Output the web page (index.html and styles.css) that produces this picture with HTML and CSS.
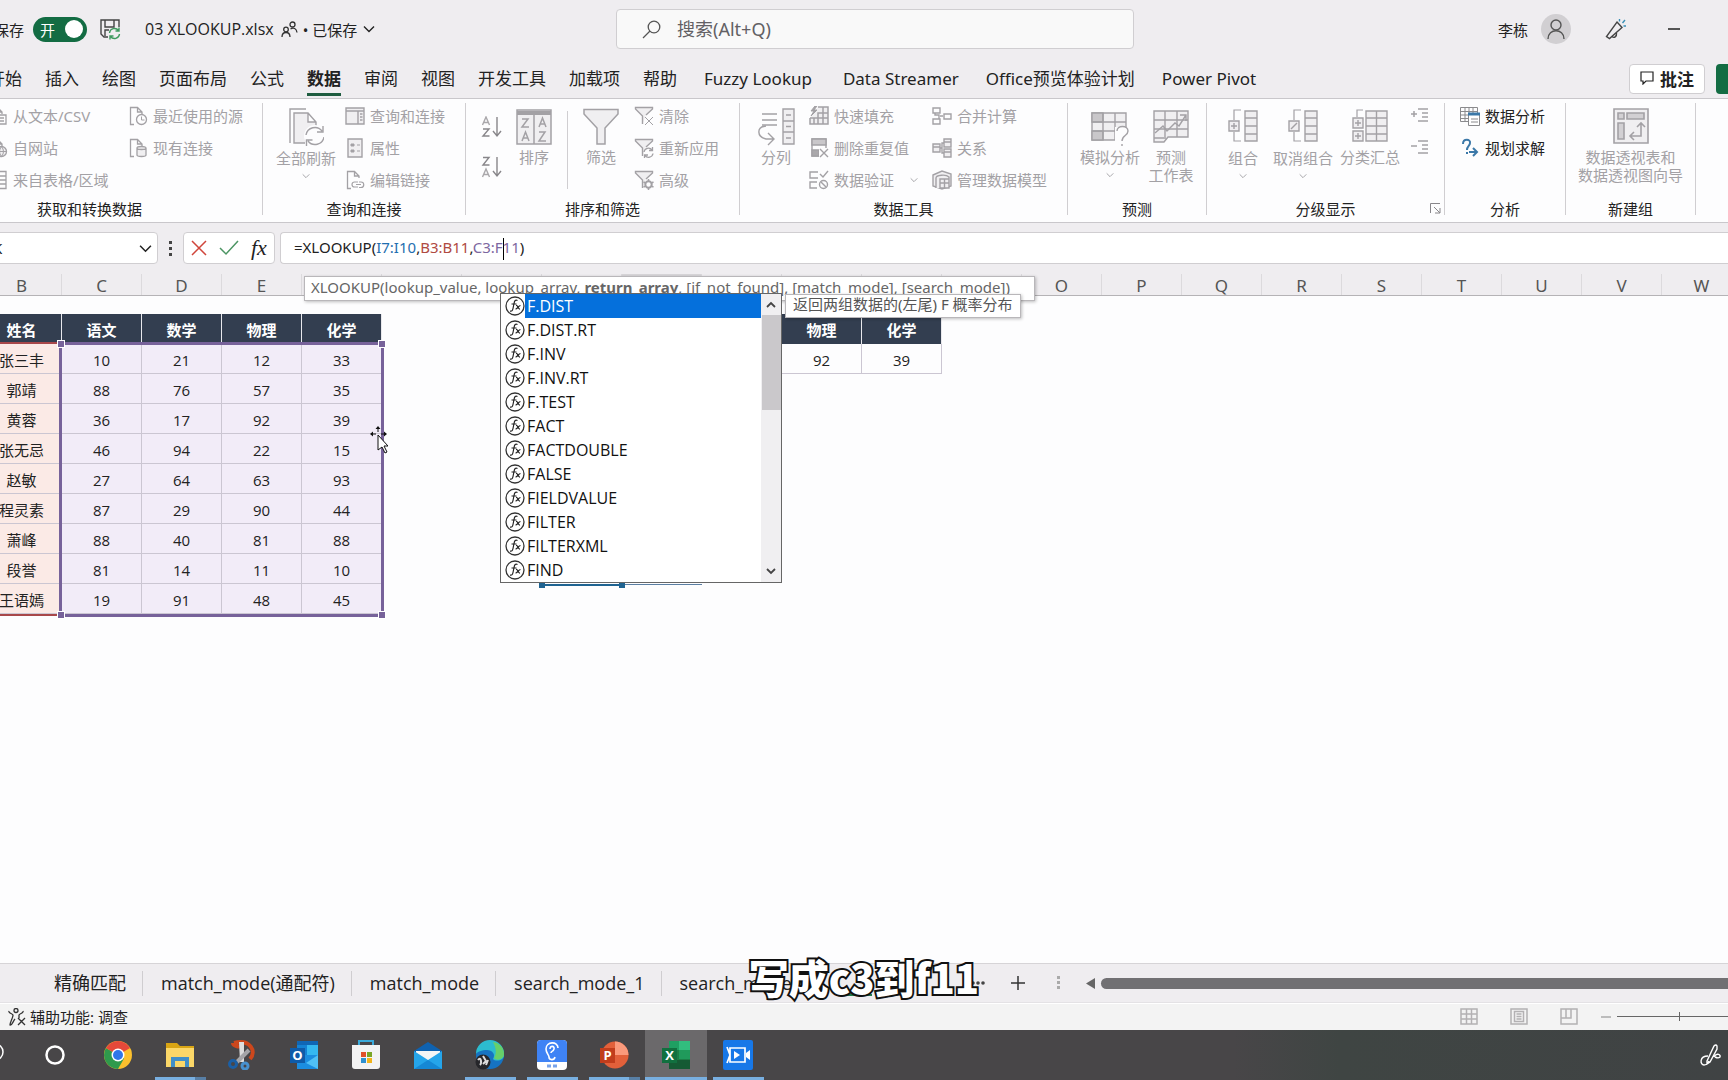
FILE: index.html
```html
<!DOCTYPE html>
<html lang="zh-CN">
<head>
    <meta charset="UTF-8">
    <meta name="viewport" content="width=device-width, initial-scale=1.0">
    <title>03 XLOOKUP.xlsx</title>
    <link rel="stylesheet" href="styles.css">
</head>
<body>
    <!-- shared icons -->
    <svg class="defs" aria-hidden="true">
        <symbol id="chevron" viewBox="0 0 12 8"><path d="M1 1.5l5 5 5-5" fill="none" stroke="currentColor" stroke-width="1.4"/></symbol>
        <symbol id="fx" viewBox="0 0 20 20"><circle cx="10" cy="10" r="9" fill="#fff" stroke="#333" stroke-width="1.3"/><path d="M12.500 4.500c-2-1-3 0-3.500 3l-1 5c-.5 2.500-1.500 3-3 2.500M6.500 8h5M11 9.500c2-.5 2 4 4 3.500M15.500 9.500c-2 0-3 3.500-5 3.500" fill="none" stroke="#222" stroke-width="1.200"/></symbol>
        <symbol id="page" viewBox="0 0 20 20"><path d="M6 18.5H2.500V1.500h7l4.500 4.500v2M9.500 1.500V6H14" fill="none" stroke="currentColor" stroke-width="1.3"/></symbol>
        <symbol id="funnel" viewBox="0 0 20 20"><path d="M8.500 18v-8L1.500 3V1.500h17V3L12 9" fill="#f0eff1" stroke="currentColor" stroke-width="1.4"/></symbol>
    </svg>

    <header class="titlebar">
        <div class="title-left">
            <label class="autosave">保存<input type="checkbox" checked><span class="switch">开</span></label>
            <button class="plain save" aria-label="保存">
                <svg width="21" height="21" viewBox="0 0 21 21" fill="none" stroke="#444" stroke-width="1.400"><path d="M8 18H4l-3-3V1h18v7M5 1v7h9V1M5 17v-6h4"/><path d="M9.500 14a5 5 0 0 1 9-2.500M19 8.500v3.500h-3.500M19.500 15a5 5 0 0 1-9 2.500M10 20.500V17h3.500" stroke="#3f9a5f"/></svg>
            </button>
            <span class="filename">03 XLOOKUP.xlsx</span>
            <svg width="17" height="17" viewBox="0 0 17 17" fill="none" stroke="#333" stroke-width="1.300"><circle cx="5" cy="8.500" r="2.300"/><path d="M1 16c0-6 8-6 8 0"/><circle cx="11.500" cy="3.500" r="2.500"/><path d="M9.500 8c3-2 6-.5 6.500 3.500"/></svg>
            <button class="plain saved">• 已保存 <svg width="12" height="8"><use href="#chevron"/></svg></button>
        </div>
        <label class="search">
            <svg width="19" height="19" viewBox="0 0 19 19" fill="none" stroke="#555" stroke-width="1.300"><circle cx="12" cy="7" r="5.800"/><path d="M8 11l-7 7"/></svg>
            <input type="text" placeholder="搜索(Alt+Q)" aria-label="搜索">
        </label>
        <div class="title-right">
            <span>李栋</span>
            <span class="avatar"><svg width="20" height="20" viewBox="0 0 20 20" fill="none" stroke="#555" stroke-width="1.400"><circle cx="10" cy="6" r="5"/><path d="M2 20c0-11 16-11 16 0"/></svg></span>
            <button class="plain horn" aria-label="新增功能"><svg width="22" height="22" viewBox="0 0 22 22" fill="none" stroke="#444" stroke-width="1.400"><path d="M12 4l5 5.500L4.500 20.500 1.500 18.500zM7 18.500c2 2 5 0 4.500-3.500"/><path d="M14.500 3.500V1M17.500 5L20 2M18.500 8H21" stroke="#3a8fb5"/></svg></button>
            <button class="plain minimize" aria-label="最小化"><svg width="12" height="4" viewBox="0 0 12 4"><path d="M0 2h12" stroke="#222" stroke-width="1.500"/></svg></button>
        </div>
    </header>

    <nav class="tabs">
        <a href="#">开始</a>
        <a href="#">插入</a>
        <a href="#">绘图</a>
        <a href="#">页面布局</a>
        <a href="#">公式</a>
        <a href="#" class="active">数据</a>
        <a href="#">审阅</a>
        <a href="#">视图</a>
        <a href="#">开发工具</a>
        <a href="#">加载项</a>
        <a href="#">帮助</a>
        <a href="#" class="latin">Fuzzy Lookup</a>
        <a href="#" class="latin">Data Streamer</a>
        <a href="#">Office预览体验计划</a>
        <a href="#" class="latin">Power Pivot</a>
        <div class="tab-actions">
            <button class="comments"><svg width="14" height="14" viewBox="0 0 14 14" fill="none" stroke="#222" stroke-width="1.200"><path d="M1 1h12v9H6l-3 3v-3H1z"/></svg>批注</button>
            <button class="share" aria-label="共享"></button>
        </div>
    </nav>

    <section class="ribbon">
        <div class="group g-get">
            <div class="group-body">
                <div class="col wide">
                    <button class="small"><svg width="20" height="20"><use href="#page"/><path d="M8 9h10v9H8zM10 12h6M10 15h6" fill="none" stroke="currentColor" stroke-width="1.300"/></svg>从文本/CSV</button>
                    <button class="small"><svg width="20" height="20"><use href="#page"/><circle cx="13.500" cy="13.500" r="5" fill="#f0eff1" stroke="currentColor" stroke-width="1.300"/><path d="M8.500 13.500h10M13.500 8.500q-4 5 0 10q4-5 0-10" fill="none" stroke="currentColor"/></svg>自网站</button>
                    <button class="small"><svg width="20" height="20" fill="none" stroke="currentColor" stroke-width="1.300"><path d="M2 1.500h16v17H2zM2 6h16M2 10h16M2 14h16M10 6v12"/></svg>来自表格/区域</button>
                </div>
                <div class="col">
                    <button class="small"><svg width="20" height="20"><use href="#page"/><circle cx="13.500" cy="13.500" r="5" fill="#fdfdfe" stroke="currentColor" stroke-width="1.300"/><path d="M13.500 10.500v3.500h3" fill="none" stroke="currentColor"/></svg>最近使用的源</button>
                    <button class="small"><svg width="20" height="20"><use href="#page"/><path d="M9 10v7c0 2 9 2 9 0v-7c0-2-9-2-9 0c0 2 9 2 9 0" fill="#f0eff1" stroke="currentColor" stroke-width="1.300"/></svg>现有连接</button>
                </div>
            </div>
            <div class="group-name">获取和转换数据</div>
        </div>

        <div class="group g-query">
            <div class="group-body">
                <button class="big">
                    <svg width="36" height="38" viewBox="0 0 36 38" fill="none" stroke="currentColor" stroke-width="1.400"><path d="M2 35V1h16"/><path d="M17 35H6V5h14l8 9v6M20 5v9h8" fill="#f0eff1"/><circle cx="27" cy="28" r="11" fill="#fdfdfe" stroke="none"/><path d="M18 27a9 9 0 0 1 16-4M35 18v6h-6M36 29a9 9 0 0 1-16 4M18.500 38v-6h6"/></svg>
                    <span class="low">全部刷新</span>
                    <svg width="8" height="6"><use href="#chevron"/></svg>
                </button>
                <div class="col">
                    <button class="small"><svg width="20" height="20" fill="#f0eff1" stroke="currentColor" stroke-width="1.400"><path d="M1 2h18v16H1z"/><path d="M1 5h18M13 5v13M15 8h2.500M15 11h2.500M15 14h2.500"/></svg>查询和连接</button>
                    <button class="small"><svg width="20" height="20" fill="#f0eff1" stroke="currentColor" stroke-width="1.400"><path d="M3 1h14v18H3z"/><path d="M6 6h3v2H6zM6 12h3v2H6zM12 7h3M12 13h3" fill="currentColor" stroke-width="1"/></svg>属性</button>
                    <button class="small"><svg width="20" height="20"><use href="#page"/><path d="M13 12H9.500a2.500 2.500 0 0 0 0 5H13M11 14.500h5M14 12h2a2.500 2.500 0 0 1 0 5.500h-2" fill="none" stroke="currentColor" stroke-width="1.200"/></svg>编辑链接</button>
                </div>
            </div>
            <div class="group-name">查询和连接</div>
        </div>

        <div class="group g-sort">
            <div class="group-body">
                <div class="az">
                    <button class="plain" aria-label="升序"><svg width="22" height="22" fill="none" stroke="#88868a" stroke-width="1.400"><path d="M1.500 9L5 1l3.500 8M2.500 6.500h5" stroke="#aaa8ab"/><path d="M2 13h6l-6 7h6.500M16 1v19M12 15l4 5 4-5"/></svg></button>
                    <button class="plain" aria-label="降序"><svg width="22" height="22" fill="none" stroke="#88868a" stroke-width="1.400"><path d="M2 1.500h6L2 9h6.500M16 1v19M12 15l4 5 4-5"/><path d="M1.500 21L5 13l3.500 8M2.500 18.500h5" stroke="#aaa8ab"/></svg></button>
                </div>
                <button class="big narrow">
                    <svg width="36" height="38" fill="none" stroke="currentColor" stroke-width="1.500"><path d="M1 2h34v34H1z" fill="#f0eff1"/><path d="M1 5h34" stroke-width="4"/><path d="M18 7v29"/><path d="M6 11h6l-6 8h7M6 33l3.500-9 3.500 9M7 30h5M23 19l3.500-9 3.500 9M24 16h5M23 24h6l-6 9h7"/></svg>
                    <span>排序</span>
                </button>
                <div class="rule"></div>
                <button class="big narrow">
                    <svg width="36" height="38" viewBox="0 0 36 38"><path d="M1 1.500h34V6L22 20v16h-8V20L1 6z" fill="#f0eff1" stroke="currentColor" stroke-width="1.500"/></svg>
                    <span>筛选</span>
                </button>
                <div class="col">
                    <button class="small"><svg width="20" height="20"><use href="#funnel"/><path d="M11 11l8 8M19 11l-8 8" stroke="currentColor"/></svg>清除</button>
                    <button class="small"><svg width="20" height="20"><use href="#funnel"/><path d="M10 14a4.500 4.500 0 0 1 8-2M18.500 9v3.500H15M19 15.500a4.500 4.500 0 0 1-8 2M10.500 20v-3H14" fill="none" stroke="currentColor" stroke-width="1.300"/></svg>重新应用</button>
                    <button class="small"><svg width="20" height="20"><use href="#funnel"/><circle cx="14.500" cy="14.500" r="3.200" fill="none" stroke="currentColor" stroke-width="2"/><path d="M14.500 9v3M14.500 17v3M9.500 12l2 1M17 16l2.500 1M19.500 12l-2 1M12 16l-2.500 1" stroke="currentColor" stroke-width="1.500"/></svg>高级</button>
                </div>
            </div>
            <div class="group-name">排序和筛选</div>
        </div>

        <div class="group g-tools">
            <div class="group-body">
                <button class="big split">
                    <svg width="38" height="38" viewBox="0 0 38 38" fill="none" stroke="currentColor" stroke-width="1.400"><path d="M5 6h15M5 12h15M5 17h15"/><path d="M9 18C-1 19 0 29 9 31h7M11 25l6 6-6 6"/><path d="M26 1h11v35H26zM26 13h11M26 24h11" fill="#f0eff1"/><path d="M29 7h5M29 18.500h5M29 30h5"/></svg>
                    <span>分列</span>
                </button>
                <div class="col tools">
                    <button class="small"><svg width="20" height="20" fill="none" stroke="currentColor" stroke-width="1.500"><path d="M9 1h10v17H1v-6M1 12h18M9 18V7h10M14 1v17M5 12v6" fill="#f0eff1"/><path d="M6 0L2 5h3l-3 5 6-6H5l3-4" fill="currentColor" stroke-width="1"/></svg>快速填充</button>
                    <button class="small"><svg width="20" height="20" fill="#f0eff1" stroke="currentColor" stroke-width="1.400"><path d="M3 1h14v17H3z" fill="none"/><path d="M3 1h14v6H3z" fill="#c9c7ca"/><path d="M3 12h7v6H3z" fill="#aaa8ab"/><path d="M10 10h10v10H10z" fill="#fdfdfe" stroke="none"/><path d="M11 11l8 8M19 11l-8 8"/></svg>删除重复值</button>
                    <button class="small"><svg width="20" height="20" fill="none" stroke="currentColor" stroke-width="1.400"><path d="M9 2H1v6h8M8 12H1v6h7M11 4l3 3 5-6"/><circle cx="14.500" cy="14.500" r="4"/><path d="M12 12l5 5"/></svg>数据验证<svg class="drop" width="8" height="6"><use href="#chevron"/></svg></button>
                </div>
                <div class="col">
                    <button class="small"><svg width="20" height="20" fill="none" stroke="currentColor" stroke-width="1.400"><path d="M1 2h7v5H1zM1 13h7v5H1zM12 8h7v5h-7zM3 7v2h4v4M8 10h3"/></svg>合并计算</button>
                    <button class="small"><svg width="20" height="20" fill="#f0eff1" stroke="currentColor" stroke-width="1.400"><path d="M7 10h3V5h3M10 10v5h3" fill="none"/><path d="M1 6h7v8H1zM12 1h7v8h-7zM12 11h7v8h-7zM1 9h7M12 4h7M12 14h7"/></svg>关系</button>
                    <button class="small"><svg width="20" height="20" fill="#f0eff1" stroke="currentColor" stroke-width="1.400"><path d="M1 5l9-4 9 3v12l-9 3-9-3z"/><path d="M4 18V8c0-3 10-4 13-1v11M8 9h9v9H8zM8 13h9M12.500 9v9"/></svg>管理数据模型</button>
                </div>
            </div>
            <div class="group-name">数据工具</div>
        </div>

        <div class="group g-forecast">
            <div class="group-body">
                <button class="big">
                    <svg width="38" height="38" viewBox="0 0 38 38" fill="none" stroke="currentColor" stroke-width="1.400"><path d="M1 5h34v27H1z" fill="#f0eff1"/><path d="M1 5h11v9H1zM1 23h11v9H1z" fill="#c9c7ca"/><path d="M1 14h34M1 23h34M12 5v27M24 5v27"/><path d="M24 19h14v19H24z" fill="#fdfdfe" stroke="none"/><path d="M26 23c0-6 11-6 11 0c0 5-6 4-6 10M31 36v2"/></svg>
                    <span>模拟分析</span>
                    <svg width="8" height="6"><use href="#chevron"/></svg>
                </button>
                <button class="big mid">
                    <svg width="36" height="38" viewBox="0 0 36 38" fill="none" stroke="currentColor" stroke-width="1.400"><path d="M1 3h34v26H15l-4 5H1zM1 12h34M1 21h34M12 3v26M24 3v26" fill="#f0eff1"/><path d="M1 30h12M2 25l8-7 4 5 8-8 4 3L33 7M27 7h6v6"/></svg>
                    <span>预测<br>工作表</span>
                </button>
            </div>
            <div class="group-name">预测</div>
        </div>

        <div class="group g-outline">
            <div class="group-body">
                <button class="big mid">
                    <svg width="30" height="38" viewBox="0 0 30 38" fill="none" stroke="currentColor" stroke-width="1.400"><path d="M13 2H6v10M6 24v9h7" stroke-width="1.200"/><path d="M1 13h10v10H1zM17 3h12v30H17zM17 10h12M17 18h12M17 26h12" fill="#f0eff1"/><path d="M3 18h6M6 15v6"/></svg>
                    <span class="low">组合</span>
                    <svg width="8" height="6"><use href="#chevron"/></svg>
                </button>
                <button class="big">
                    <svg width="30" height="38" viewBox="0 0 30 38" fill="none" stroke="currentColor" stroke-width="1.400"><path d="M13 2H6v10M6 24v9h7" stroke-width="1.200"/><path d="M1 13h10v10H1zM17 3h12v30H17zM17 10h12M17 18h12M17 26h12" fill="#f0eff1"/><path d="M3 21l6-6"/></svg>
                    <span class="low">取消组合</span>
                    <svg width="8" height="6"><use href="#chevron"/></svg>
                </button>
                <button class="big">
                    <svg width="36" height="38" viewBox="0 0 36 38" fill="none" stroke="currentColor" stroke-width="1.400"><path d="M11 2H5v7" stroke-width="1.200"/><path d="M1 10h10v10H1zM1 23h10v10H1zM14 3h21v30H14zM14 10h21M14 18h21M14 26h21M24.500 3v30" fill="#f0eff1"/><path d="M3 15h6M6 12v6M3 28h6M6 25v6"/></svg>
                    <span>分类汇总</span>
                </button>
                <div class="col outline-side">
                    <button class="small" aria-label="显示明细数据"><svg width="26" height="20" fill="none" stroke="currentColor" stroke-width="1.500"><path d="M4 8h6M7 5v6M11 3h10M15 7h6M15 11h6M11 15h10"/></svg></button>
                    <button class="small" aria-label="隐藏明细数据"><svg width="26" height="20" fill="none" stroke="currentColor" stroke-width="1.500"><path d="M4 8h6M11 3h10M15 7h6M15 11h6M11 15h10"/></svg></button>
                </div>
            </div>
            <div class="group-name">分级显示
                <button class="plain launcher" aria-label="分级显示设置"><svg width="11" height="11" viewBox="0 0 11 11" fill="none" stroke="#88868a"><path d="M.5 10V.5H10M4 4l6 6M10 5v5H5"/></svg></button>
            </div>
        </div>

        <div class="group g-analysis">
            <div class="group-body">
                <div class="col">
                    <button class="small enabled"><svg width="20" height="20" fill="none" stroke="#8a8a8d"><path d="M.5 1.500h17v14H.5zM.5 5.500h17M.5 9h17M.5 12.500h17M5 1.500v14M9 1.500v14M13 1.500v14"/><path d="M8.500 8.500h11v11h-11z" fill="#fff"/><path d="M8 8h12" stroke="#3b78a8" stroke-width="3"/><path d="M11 13h7M11 16h7"/></svg>数据分析</button>
                    <button class="small enabled"><svg width="20" height="20" fill="none" stroke="#3b78a8" stroke-width="2"><path d="M3 6c0-6 8-5 7-1c0 3-3 3-3 7M7 14v2M9 14h8M13 10l4 4-4 4"/></svg>规划求解</button>
                </div>
            </div>
            <div class="group-name">分析</div>
        </div>

        <div class="group g-new">
            <div class="group-body">
                <button class="big pivot">
                    <svg width="36" height="38" viewBox="0 0 36 38" fill="none" stroke="currentColor" stroke-width="1.600"><path d="M1 1h34v34H1z" fill="#f0eff1"/><path d="M5 5h6v6H5zM14 5h17v6H14zM5 15h6v16H5z" fill="#d2d0d3"/><path d="M17 28h11V15M24 19l4-4 4 4M21 24l-4 4 4 4"/></svg>
                    <span>数据透视表和<br>数据透视图向导</span>
                </button>
            </div>
            <div class="group-name">新建组</div>
        </div>
    </section>

    <section class="formula-bar">
        <label class="name-box"><input type="text" value="K" aria-label="名称框"><svg width="13" height="9"><use href="#chevron"/></svg></label>
        <svg class="grip" width="4" height="15" viewBox="0 0 4 15"><path d="M0 0h3v3H0zM0 6h3v3H0zM0 12h3v3H0z" fill="#444"/></svg>
        <div class="fx-buttons">
            <button class="plain" aria-label="取消"><svg width="16" height="16" viewBox="0 0 16 16"><path d="M1 1l14 14M15 1L1 15" stroke="#d0453b" stroke-width="1.500"/></svg></button>
            <button class="plain" aria-label="输入"><svg width="20" height="16" viewBox="0 0 20 16"><path d="M1 8l6 6L19 1" fill="none" stroke="#4c9563" stroke-width="1.500"/></svg></button>
            <button class="plain insert-fx">fx</button>
        </div>
        <div class="formula" role="textbox" aria-label="编辑栏">=XLOOKUP(<span class="ref-blue">I7:I10</span>,<span class="ref-red">B3:B11</span>,<span class="ref-purple">C3:F<i class="caret"></i>11</span>)</div>
    </section>

    <main class="sheet">
        <div class="col-heads">
            <span>B</span><span>C</span><span>D</span><span>E</span><span></span><span></span><span></span><span></span><span class="current"></span><span></span><span></span><span></span><span></span><span>O</span><span>P</span><span>Q</span><span>R</span><span>S</span><span>T</span><span>U</span><span>V</span><span>W</span>
        </div>
        <div class="cells">
            <div class="source">
                <table>
                    <thead><tr><th>姓名</th><th>语文</th><th>数学</th><th>物理</th><th>化学</th></tr></thead>
                    <tbody>
                        <tr><td>张三丰</td><td>10</td><td>21</td><td>12</td><td>33</td></tr>
                        <tr><td>郭靖</td><td>88</td><td>76</td><td>57</td><td>35</td></tr>
                        <tr><td>黄蓉</td><td>36</td><td>17</td><td>92</td><td>39</td></tr>
                        <tr><td>张无忌</td><td>46</td><td>94</td><td>22</td><td>15</td></tr>
                        <tr><td>赵敏</td><td>27</td><td>64</td><td>63</td><td>93</td></tr>
                        <tr><td>程灵素</td><td>87</td><td>29</td><td>90</td><td>44</td></tr>
                        <tr><td>萧峰</td><td>88</td><td>40</td><td>81</td><td>88</td></tr>
                        <tr><td>段誉</td><td>81</td><td>14</td><td>11</td><td>10</td></tr>
                        <tr><td>王语嫣</td><td>19</td><td>91</td><td>48</td><td>45</td></tr>
                    </tbody>
                </table>
                <div class="range red"></div>
                <div class="range purple"><i></i><i></i><i></i><i></i></div>
                <svg class="cursor" width="18" height="28" viewBox="0 0 18 28"><path d="M8 0L5.500 3h2v3h1V3h2zM0 8l3-2.500v2h3v1H3v2zM17 8l-3-2.500v2h-3v1h3v2z" fill="#111"/><path d="M8 9v15l4-3 3 6 2-1-3-6h4z" fill="#fff" stroke="#111"/></svg>
            </div>
            <table class="lookup">
                <thead><tr><th>物理</th><th>化学</th></tr></thead>
                <tbody><tr><td>92</td><td>39</td></tr></tbody>
            </table>
            <div class="range blue"><i></i><i></i></div>
        </div>

        <div class="signature">XLOOKUP(lookup_value, lookup_array, <b>return_array</b>, [if_not_found], [match_mode], [search_mode])</div>
        <div class="description">返回两组数据的(左尾) F 概率分布</div>
        <div class="suggest">
            <ul>
                <li class="selected"><svg width="20" height="20"><use href="#fx"/></svg><span>F.DIST</span></li>
                <li><svg width="20" height="20"><use href="#fx"/></svg><span>F.DIST.RT</span></li>
                <li><svg width="20" height="20"><use href="#fx"/></svg><span>F.INV</span></li>
                <li><svg width="20" height="20"><use href="#fx"/></svg><span>F.INV.RT</span></li>
                <li><svg width="20" height="20"><use href="#fx"/></svg><span>F.TEST</span></li>
                <li><svg width="20" height="20"><use href="#fx"/></svg><span>FACT</span></li>
                <li><svg width="20" height="20"><use href="#fx"/></svg><span>FACTDOUBLE</span></li>
                <li><svg width="20" height="20"><use href="#fx"/></svg><span>FALSE</span></li>
                <li><svg width="20" height="20"><use href="#fx"/></svg><span>FIELDVALUE</span></li>
                <li><svg width="20" height="20"><use href="#fx"/></svg><span>FILTER</span></li>
                <li><svg width="20" height="20"><use href="#fx"/></svg><span>FILTERXML</span></li>
                <li><svg width="20" height="20"><use href="#fx"/></svg><span>FIND</span></li>
            </ul>
            <div class="scroll">
                <svg width="10" height="21" viewBox="0 0 10 21"><path d="M1 13l4-4 4 4" fill="none" stroke="#444" stroke-width="1.800"/></svg>
                <div class="thumb"></div>
                <svg width="10" height="21" viewBox="0 0 10 21"><path d="M1 8l4 4 4-4" fill="none" stroke="#444" stroke-width="1.800"/></svg>
            </div>
        </div>
    </main>

    <nav class="sheet-tabs">
        <a href="#">精确匹配</a>
        <a href="#">match_mode(通配符)</a>
        <a href="#">match_mode</a>
        <a href="#">search_mode_1</a>
        <a href="#" class="last">search_mode</a>
        <span class="current-tab"></span>
        <button class="plain more" aria-label="更多工作表"><svg width="14" height="4" viewBox="0 0 14 4" fill="#444"><circle cx="2" cy="2" r="1.800"/><circle cx="7" cy="2" r="1.800"/><circle cx="12" cy="2" r="1.800"/></svg></button>
        <button class="plain add" aria-label="新工作表"><svg width="14" height="14" viewBox="0 0 14 14"><path d="M7 0v14M0 7h14" stroke="#333" stroke-width="1.500"/></svg></button>
        <svg class="dots" width="3" height="14" viewBox="0 0 3 14"><path d="M0 0h3v3H0zM0 5h3v3H0zM0 10h3v3H0z" fill="#aaa"/></svg>
        <svg width="9" height="11" viewBox="0 0 9 11"><path d="M9 0v11L0 5.500z" fill="#666"/></svg>
        <div class="hscroll"></div>
        <div class="subtitle">写成c3到f11</div>
    </nav>

    <footer class="status">
        <button class="plain access"><svg width="18" height="18" viewBox="0 0 18 18" fill="none" stroke="#333" stroke-width="1.300"><circle cx="8" cy="2.500" r="2"/><path d="M1 3c-1 2 4 3 4 4 0 3-3 7-3 10 2 1 3-4 5-6M15 3c1 2-4 3-4 4v3M10 10l7 7M17 10l-7 7"/></svg>辅助功能: 调查</button>
        <div class="views">
            <button class="plain" aria-label="普通"><svg width="18" height="17" fill="none" stroke="#b3b1b3" stroke-width="1.500"><path d="M1 1h16v15H1zM1 6h16M1 11h16M6.500 1v15M11.500 1v15"/></svg></button>
            <button class="plain" aria-label="页面布局"><svg width="18" height="17" fill="none" stroke="#b3b1b3" stroke-width="1.500"><path d="M1 1h16v15H1zM4.500 3.500h9v10h-9zM6.500 6h5M6.500 8.500h5M6.500 11h5"/></svg></button>
            <button class="plain" aria-label="分页预览"><svg width="18" height="17" fill="none" stroke="#b3b1b3" stroke-width="1.500"><path d="M1 1h16v15H1zM1 10h10V1M6 1v9"/></svg></button>
        </div>
        <button class="plain zoom-out" aria-label="缩小"><svg width="10" height="2"><path d="M0 1h10" stroke="#aaa" stroke-width="1.500"/></svg></button>
        <input class="zoom" type="range" min="10" max="400" value="400" aria-label="缩放">
    </footer>

    <div class="taskbar">
        <button class="app" aria-label="搜索"><svg width="24" height="30" viewBox="0 0 24 30"><circle cx="13" cy="12" r="8" fill="none" stroke="#fff" stroke-width="1.500"/></svg></button>
        <button class="app" aria-label="Cortana"><svg width="30" height="30" viewBox="0 0 30 30"><circle cx="14" cy="15" r="8.500" fill="none" stroke="#fff" stroke-width="2.500"/></svg></button>
        <button class="app" aria-label="Chrome"><svg width="30" height="30" viewBox="0 0 30 30"><circle cx="15" cy="15" r="14" fill="#fbc02d"/><path d="M15 15L2.900 8A14 14 0 0 0 15 29l6-10.500z" fill="#2f9a4c"/><path d="M15 15L2.900 8a14 14 0 0 1 24.200 0z" fill="#e5493a"/><circle cx="15" cy="15" r="6.500" fill="#fff"/><circle cx="15" cy="15" r="5" fill="#2f76e8"/></svg></button>
        <button class="app open multi" aria-label="文件资源管理器"><svg width="30" height="30" viewBox="0 0 30 30"><path d="M1 3h11l3 3h14v20H1z" fill="#d9a514"/><path d="M1 8h28v19H1z" fill="#fbd768"/><path d="M6 27V17h18v10h-4v-6H10v6z" fill="#418fc7"/></svg></button>
        <button class="app" aria-label="截图工具"><svg width="30" height="30" viewBox="0 0 30 30" fill="none"><path d="M7 3c16-4 23 8 16 16M6 3c0 3 6 4 8 3" stroke="#cc471c" stroke-width="4"/><path d="M12 2l1 20h4V2z" fill="#ddd"/><path d="M22 10L10 22" stroke="#a5a5a8" stroke-width="4"/><circle cx="6" cy="24" r="3.500" stroke="#1b5fa5" stroke-width="3"/><circle cx="18" cy="26" r="3" stroke="#4791cf" stroke-width="3"/></svg></button>
        <button class="app" aria-label="Outlook"><svg width="30" height="30" viewBox="0 0 30 30"><path d="M8 1h21v28H8z" fill="#1066b5"/><path d="M8 5h10v10H8z" fill="#1482d4"/><path d="M18 5h11v10H18z" fill="#35b8f1"/><path d="M8 15h21v14H8z" fill="#1b8de0"/><path d="M29 15L17 23l12 6z" fill="#50c0f5"/><path d="M1 8h15v15H1z" fill="#0f5ba8"/><text x="8.500" y="20" text-anchor="middle" font-family="Open Sans, sans-serif" font-weight="700" font-size="13" fill="#fff">O</text></svg></button>
        <button class="app" aria-label="Microsoft Store"><svg width="30" height="30" viewBox="0 0 30 30"><path d="M8 6V1h14v5" fill="none" stroke="#3baada" stroke-width="2"/><path d="M1 5h28v21q0 3-3 3H4q-3 0-3-3z" fill="#f3f3f3"/><path d="M10 12h5v5h-5z" fill="#e0502a"/><path d="M16 12h5v5h-5z" fill="#7aa626"/><path d="M10 18h5v5h-5z" fill="#2f90d0"/><path d="M16 18h5v5h-5z" fill="#f2b41a"/></svg></button>
        <button class="app" aria-label="邮件"><svg width="30" height="30" viewBox="0 0 30 30"><path d="M1 11L15 2l14 9v6H1z" fill="#0f62b0"/><path d="M3 11h24v10H3z" fill="#f5f5f5"/><path d="M1 11l14 9 14-9v18H1z" fill="#25a5ea"/><path d="M1 29l14-9 14 9z" fill="#1588d5"/></svg></button>
        <button class="app open" aria-label="Edge"><svg width="30" height="30" viewBox="0 0 30 30"><circle cx="15" cy="15" r="14" fill="#1673c2"/><path d="M1 14A14 14 0 0 1 29 14c1 7-9 8-11 5 3-5-1-9-6-9S2 12 1 14z" fill="#2cbccf"/><path d="M18 2c7 1 11 6 11 12 0 6-8 7-10 4 3-5 2-10-1-16z" fill="#67d069"/><circle cx="8" cy="22" r="7.500" fill="#26262a"/><path d="M3 20c3-4 4 3 2 5M8 16l3 5-3 3M11 25l2-5" stroke="#ddd" stroke-width="2" fill="none"/></svg></button>
        <button class="app open" aria-label="录音"><svg width="30" height="30" viewBox="0 0 30 30"><rect width="30" height="30" rx="4" fill="#fff"/><path d="M4 0h22q4 0 4 4v18H0V4q0-4 4-4z" fill="#3f83f5"/><path d="M18 17c-1 4-6 3-6 0 0-2-3-4-3-8 0-8 12-8 12-1M13 9c0-4 5-3 4 0s-3 2-3 4" fill="none" stroke="#fff" stroke-width="1.600"/><path d="M10 24.500h4v3h-4zM16 24.500h4v3h-4z" fill="#79a3ea"/></svg></button>
        <button class="app open multi" aria-label="PowerPoint"><svg width="30" height="30" viewBox="0 0 30 30"><circle cx="16" cy="15" r="13.500" fill="#e2603a"/><path d="M16 1.500A13.500 13.500 0 0 1 29.500 15H16z" fill="#fa9a7c"/><path d="M1 8h15v15H1z" fill="#c13d1c"/><text x="8.500" y="20" text-anchor="middle" font-family="Open Sans, sans-serif" font-weight="700" font-size="13" fill="#fff">P</text></svg></button>
        <button class="app open active" aria-label="Excel"><svg width="30" height="30" viewBox="0 0 30 30"><path d="M8 1h21v28H8z" fill="#1b7e46"/><path d="M8 1h10v9H8z" fill="#1f9f62"/><path d="M18 1h11v9H18z" fill="#32bd7e"/><path d="M18 10h11v9H18z" fill="#209a5b"/><path d="M8 20h21v9H8z" fill="#155a34"/><path d="M1 8h15v15H1z" fill="#11703f"/><text x="8.500" y="20" text-anchor="middle" font-family="Open Sans, sans-serif" font-weight="700" font-size="13" fill="#fff">X</text></svg></button>
        <button class="app open" aria-label="录屏"><svg width="30" height="30" viewBox="0 0 30 30" fill="none" stroke="#fff" stroke-width="1.700"><rect width="30" height="30" rx="2" fill="#1778e8" stroke="none"/><path d="M7 8h15v14H7zM4 7l3 8-3 8"/><path d="M11 11l6 4-6 4z" fill="#fff" stroke="none"/><path d="M27 10v10l-4-3v-4z" fill="#fff" stroke="none"/></svg></button>
        <button class="plain pen" aria-label="Windows Ink"><svg width="22" height="22" viewBox="0 0 22 22" fill="none" stroke="#fff" stroke-width="1.400"><path d="M7 17L14 2q2-2 3 0v3L10 18l-3 2zM8 12c-9 0-8 9-4 9 3 0 4-2 5-4M14 13c3-5 7-2 6 0-1 1-3 1-5 0"/></svg></button>
    </div>
</body>
</html>
```
FILE: styles.css
```css
* {
    box-sizing: border-box;
}
body {
    margin: 0;
    height: 100vh;
    display: flex;
    flex-direction: column;
    overflow: hidden;
    background: #efedf0;
    color: #222;
    font-family: "Noto Sans", "Noto Sans CJK SC", sans-serif;
    font-size: 15px;
}
button, input {
    font: inherit;
    color: inherit;
}
a {
    color: inherit;
    text-decoration: none;
}
svg {
    flex: none;
    display: block;
}
.defs {
    position: absolute;
    width: 0;
    height: 0;
}
.plain {
    display: flex;
    align-items: center;
    padding: 0;
    border: none;
    background: none;
    white-space: nowrap;
}
.filename, .suggest, .sheet-tabs, table {
    font-family: "Open Sans", "Noto Sans CJK SC", sans-serif;
}

/* title bar */
.titlebar {
    flex: none;
    display: flex;
    align-items: center;
    height: 60px;
    padding-bottom: 2px;
}
.title-left, .title-right {
    display: flex;
    align-items: center;
    white-space: nowrap;
}
.title-left {
    width: 36%;
    margin-left: -6px;
}
.autosave {
    display: flex;
    align-items: center;
    gap: 9px;
}
.autosave input {
    position: absolute;
    opacity: 0;
}
.switch {
    display: flex;
    align-items: center;
    justify-content: space-between;
    width: 54px;
    height: 25px;
    padding: 0 4px 0 7px;
    border-radius: 13px;
    background: #136c43;
    color: #fff;
}
.switch::after {
    content: "";
    width: 18px;
    height: 18px;
    border-radius: 50%;
    background: #fff;
}
.save {
    margin: 0 24px 0 13px;
}
.filename {
    margin-right: 7px;
    font-size: 16px;
}
.saved {
    gap: 6px;
    margin-left: 5px;
}
.search {
    display: flex;
    align-items: center;
    gap: 16px;
    width: 30%;
    height: 40px;
    padding: 0 25px;
    border: 1px solid #d0ced1;
    border-radius: 4px;
    background: #f9f9f9;
}
.search input {
    flex: 1;
    min-width: 0;
    padding: 0;
    border: none;
    background: none;
    font-size: 18px;
}
.search input::placeholder {
    color: #626064;
}
.title-right {
    flex: 1;
    justify-content: flex-end;
    padding-right: 48px;
}
.avatar {
    display: flex;
    align-items: flex-end;
    justify-content: center;
    width: 30px;
    height: 30px;
    margin: 0 34px 0 13px;
    padding-bottom: 5px;
    border-radius: 50%;
    background: #d1cfd2;
}
.horn {
    margin-right: 41px;
}

/* ribbon tabs */
.tabs {
    flex: none;
    display: flex;
    align-items: center;
    gap: 23px;
    height: 39px;
    margin-left: -12px;
    border-bottom: 1px solid #c9c7cb;
    font-size: 17px;
    white-space: nowrap;
}
.tabs a {
    height: 34px;
    line-height: 34px;
}
.tabs .active {
    border-bottom: 3px solid #1e5c40;
    font-weight: 700;
}
.tabs .latin {
    margin: 0 4px;
}
.tab-actions {
    display: flex;
    gap: 11px;
    margin-left: auto;
}
.comments {
    display: flex;
    align-items: center;
    gap: 6px;
    height: 30px;
    padding: 0 10px 2px;
    border: 1px solid #d0ced1;
    border-radius: 4px;
    background: #fff;
    font-weight: 700;
}
.share {
    width: 11px;
    height: 30px;
    border: none;
    border-radius: 4px 0 0 4px;
    background: #136c43;
}

/* ribbon */
.ribbon {
    flex: none;
    display: flex;
    height: 124px;
    padding: 4px 0 7px;
    border-bottom: 1px solid #c9c7cb;
    background: #fdfdfe;
}
.group {
    flex: none;
    display: flex;
    flex-direction: column;
    justify-content: space-between;
    border-right: 1px solid #d0ced1;
}
.group-body {
    display: flex;
    color: #a3a1a5;
}
.group-name {
    display: flex;
    justify-content: center;
    line-height: 12px;
    white-space: nowrap;
}
.col {
    display: flex;
    flex-direction: column;
    gap: 6px;
}
.small {
    display: flex;
    align-items: center;
    gap: 5px;
    height: 26px;
    padding: 0;
    border: none;
    background: none;
    line-height: 20px;
    white-space: nowrap;
}
.enabled {
    color: #222;
}
.big {
    display: flex;
    flex-direction: column;
    align-items: center;
    width: 60px;
    padding: 5px 0 0;
    border: none;
    background: none;
    line-height: 18px;
    white-space: nowrap;
}
.big span {
    margin: 2px 0 6px;
}
.big .low {
    margin-top: 3px;
}
.big.narrow {
    width: 36px;
}
.big.split {
    width: 40px;
}
.big.mid {
    width: 46px;
}
.big.pivot {
    width: 110px;
}
.g-get {
    width: 346px;
    margin-left: -83px;
}
.g-get .group-body {
    padding-left: 71px;
}
.g-get .wide {
    width: 140px;
}
.g-query {
    width: 203px;
}
.g-query .group-body {
    gap: 9px;
    padding-left: 13px;
}
.g-sort {
    width: 274px;
}
.g-sort .group-body {
    gap: 15px;
    padding-left: 15px;
}
.az {
    display: flex;
    flex-direction: column;
    gap: 18px;
    width: 20px;
    padding-top: 13px;
}
.rule {
    width: 1px;
    height: 78px;
    margin-top: 8px;
    background: #d0ced1;
}
.g-tools {
    width: 328px;
}
.g-tools .group-body {
    gap: 13px;
    padding-left: 16px;
}
.tools {
    width: 110px;
}
.tools .drop {
    margin-left: 11px;
}
.g-forecast {
    width: 139px;
}
.g-forecast .group-body {
    gap: 8px;
    padding-left: 12px;
}
.g-outline {
    width: 238px;
}
.g-outline .group-body {
    gap: 7px;
    padding-left: 13px;
}
.launcher {
    position: absolute;
    margin-left: 219px;
}
.g-analysis {
    width: 121px;
}
.g-analysis .group-body {
    padding-left: 15px;
}
.g-new {
    width: 130px;
}
.g-new .group-body {
    justify-content: center;
}

/* formula bar */
.formula-bar {
    flex: none;
    display: flex;
    align-items: center;
    height: 50px;
    background: #efedf0;
}
.name-box, .fx-buttons, .formula {
    height: 32px;
    border: 1px solid #d0ced1;
    border-radius: 4px;
    background: #fff;
}
.name-box, .fx-buttons {
    display: flex;
    align-items: center;
}
.name-box {
    width: 166px;
    margin-left: -8px;
    padding-right: 5px;
}
.name-box input {
    flex: 1;
    min-width: 0;
    padding: 0;
    border: none;
    background: none;
}
.grip {
    margin: 0 10px 0 11px;
}
.fx-buttons {
    gap: 12px;
    width: 92px;
    padding-left: 7px;
}
.insert-fx {
    font-family: "Liberation Serif", serif;
    font-size: 22px;
    font-style: italic;
}
.formula {
    flex: 1;
    margin-left: 5px;
    padding-left: 13px;
    border-right: none;
    border-radius: 4px 0 0 4px;
    line-height: 28px;
    white-space: nowrap;
}
.ref-blue {
    color: #1f6fb0;
}
.ref-red {
    color: #b04a42;
}
.ref-purple {
    color: #7d679f;
}
.caret {
    display: inline-block;
    width: 1px;
    height: 22px;
    margin-right: -1px;
    vertical-align: middle;
    background: #000;
}

/* sheet */
.sheet {
    position: relative;
    flex: 1;
    min-height: 0;
    background: #fdfdfe;
}
.col-heads {
    display: flex;
    height: 23px;
    padding-top: 1px;
    margin-left: -18px;
    border-bottom: 1px solid #b5b3b6;
    background: #efedf0;
    color: #555;
    font-size: 17px;
    line-height: 23px;
}
.col-heads span {
    flex: none;
    width: 80px;
    border-right: 1px solid #dcdadd;
    text-align: center;
}
.col-heads .current {
    background: #d8d6d9;
}
.cells {
    position: relative;
    display: flex;
    align-items: flex-start;
    gap: 400px;
    margin: 18px 0 0 -18px;
}
.source {
    position: relative;
}
table {
    border-collapse: separate;
    border-spacing: 0;
    table-layout: fixed;
    width: 400px;
}
.lookup {
    width: 160px;
}
th, td {
    height: 30px;
    padding: 2px 0 0;
    border-right: 1px solid #cbc6d2;
    border-bottom: 1px solid #cbc6d2;
    text-align: center;
    line-height: 20px;
}
th {
    border-bottom: none;
    border-right-color: #e8e8ec;
    background: #333e50;
    color: #fff;
    font-weight: 700;
}
.source td {
    background: #f2ecf8;
}
.source td:first-child {
    background: #fbeae6;
}
.range {
    position: absolute;
}
.range i {
    position: absolute;
    width: 8px;
    height: 8px;
    border: 1px solid #fff;
    background: #77629a;
}
.red {
    top: 28px;
    right: 320px;
    bottom: -2px;
    left: 0;
    border: solid #a8474a;
    border-width: 2px 0;
}
.purple {
    top: 28px;
    right: -2px;
    bottom: -3px;
    left: 77px;
    border: 3px solid #77629a;
}
.purple i:nth-child(1) {
    top: -5px;
    left: -5px;
}
.purple i:nth-child(2) {
    top: -5px;
    right: -5px;
}
.purple i:nth-child(3) {
    bottom: -5px;
    left: -5px;
}
.purple i:nth-child(4) {
    right: -5px;
    bottom: -5px;
}
.cursor {
    position: absolute;
    top: 112px;
    left: 388px;
}
.blue {
    top: 270px;
    left: 560px;
    width: 160px;
    height: 1px;
    background: #5b7fa3;
}
.blue::before {
    content: "";
    display: block;
    width: 80px;
    height: 2px;
    background: #1f6391;
}
.blue i {
    top: -2px;
    left: -3px;
    width: 6px;
    height: 6px;
    border: none;
    background: #1f6391;
}
.blue i:last-child {
    left: 77px;
}

/* popups over the sheet */
.signature, .description, .suggest {
    position: absolute;
    border: 1px solid #b9b7ba;
    background: #fff;
    white-space: nowrap;
    box-shadow: 1px 1px 3px rgba(0, 0, 0, .25);
}
.signature {
    top: 3px;
    left: 304px;
    height: 25px;
    padding: 0 24px 0 6px;
    color: #666;
    line-height: 21px;
}
.description {
    top: 21px;
    left: 785px;
    height: 24px;
    padding: 0 7px;
    color: #555;
    line-height: 18px;
}
.suggest {
    top: 20px;
    left: 500px;
    display: flex;
    width: 282px;
    border-color: #666;
    box-shadow: none;
    font-size: 16px;
}
.suggest ul {
    flex: 1;
    margin: 0;
    padding: 0 0 0 4px;
    list-style: none;
    color: #111;
}
.suggest li {
    display: flex;
    align-items: center;
    height: 24px;
}
.suggest li span {
    flex: 1;
    padding-left: 2px;
    line-height: 24px;
}
.suggest .selected span {
    background: #0570dc;
    color: #fff;
}
.scroll {
    display: flex;
    flex-direction: column;
    align-items: center;
    width: 20px;
    background: #f0eff1;
}
.thumb {
    width: 19px;
    height: 95px;
    margin-bottom: auto;
    background: #cac8cb;
}

/* sheet tabs */
.sheet-tabs {
    position: relative;
    flex: none;
    display: flex;
    align-items: center;
    height: 40px;
    padding-left: 36px;
    border-top: 1px solid #d6d4d7;
    border-bottom: 1px solid #e4e2e5;
    font-size: 18px;
    white-space: nowrap;
}
.sheet-tabs a {
    padding: 0 16px 0 18px;
    border-right: 1px solid #cfcdd0;
    line-height: 25px;
}
.sheet-tabs .last {
    border: none;
    padding-right: 0;
}
.current-tab {
    width: 30px;
    height: 26px;
    margin: 0 99px 0 auto;
    border-bottom: 2px solid #1e7a4c;
}
.more {
    margin-right: 26px;
}
.add {
    margin-right: 32px;
}
.dots {
    margin-right: 26px;
}
.hscroll {
    width: 627px;
    height: 11px;
    margin-left: 6px;
    border-radius: 6px 0 0 6px;
    background: #717073;
}
.subtitle {
    position: absolute;
    top: -15px;
    right: 0;
    left: 0;
    color: #fff;
    font-family: "Noto Sans CJK SC", sans-serif;
    font-size: 40px;
    font-weight: 900;
    line-height: 56px;
    text-align: center;
    -webkit-text-stroke: 4px #111;
    paint-order: stroke fill;
    pointer-events: none;
}

/* status bar */
.status {
    flex: none;
    display: flex;
    align-items: center;
    height: 27px;
    padding: 0 0 1px 8px;
    border-top: 1px solid #fff;
    background: #f3f3f3;
}
.access {
    gap: 4px;
}
.views {
    display: flex;
    gap: 32px;
    margin-left: auto;
}
.zoom-out {
    margin: 0 6px 0 23px;
}
.zoom {
    flex: none;
    width: 125px;
    height: 9px;
    margin: 0 -14px 0 0;
    appearance: none;
    background:
        linear-gradient(#666, #666) center / 1px 9px no-repeat,
        linear-gradient(#666, #666) center / 100% 1px no-repeat;
}
.zoom::-webkit-slider-thumb {
    appearance: none;
    width: 5px;
    height: 9px;
    background: #666;
}

/* taskbar */
.taskbar {
    flex: none;
    display: flex;
    align-items: center;
    height: 50px;
    margin-left: -37px;
    background: linear-gradient(90deg, #484648 72%, #3f4543 78%, #404344);
}
.app {
    position: relative;
    flex: none;
    display: flex;
    align-items: center;
    justify-content: center;
    width: 62px;
    height: 50px;
    padding: 0;
    border: none;
    background: none;
}
.app.open::after {
    content: "";
    position: absolute;
    right: 5px;
    bottom: 0;
    left: 6px;
    height: 3px;
    background: #78afe0;
}
.app.multi::after {
    background: linear-gradient(90deg, #78afe0 40px, #587fa5 40px);
}
.app.active {
    background: #6b696b;
}
.app.active::after {
    right: 0;
    left: 0;
}
.pen {
    margin: 0 6px 0 auto;
}
```
